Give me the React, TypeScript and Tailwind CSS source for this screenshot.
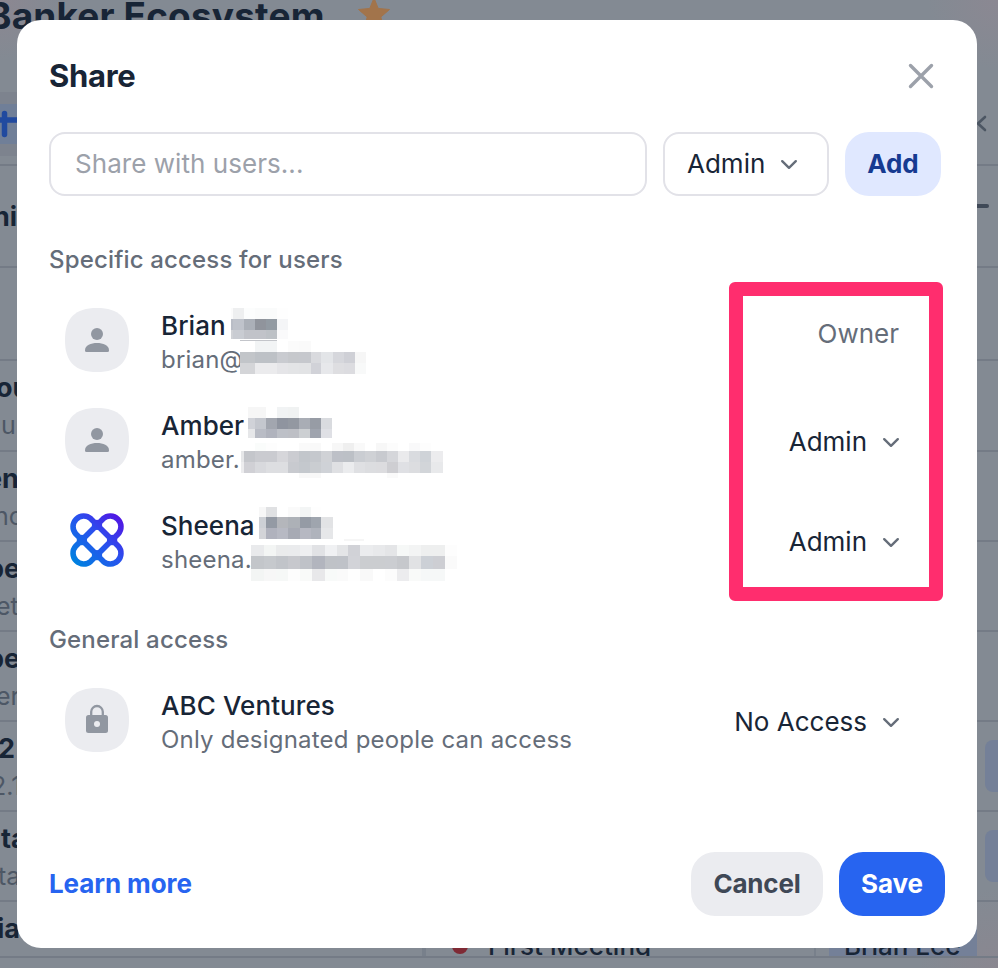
import type { ReactNode } from "react";
import { clsx } from "clsx";

type Patch = { x: number; y: number; cols: number[]; rows: number[]; cells: string[] };

const W = "#ffffff";

// each row of cells is a space separated list of colours
const users: { name: string; email: string; role: string; logo?: boolean; patches: Patch[] }[] = [
  {
    name: "Brian",
    email: "brian@",
    role: "Owner",
    patches: [
      {
        x: 231, y: 18, cols: [2, 11, 11, 11, 11, 11], rows: [11, 11, 9],
        cells: [
          "#fbfbfb #eeeff0 #fcfdfd #fafbfb #fafbfb #fefefe",
          "#b9bdc6 #bfc3cb #abb0b8 #90949c #929aa2 #f4f5f7",
          "#d0d2d6 #c9ccd2 #c1c3c9 #c1c3c9 #bdc1c6 #fafafb",
        ],
      },
      { x: 240, y: 50, cols: [37], rows: [1], cells: ["#c3c5ca"] },
      {
        x: 240, y: 51, cols: [15, 22, 11, 11, 12, 10, 12, 11, 11, 11], rows: [11, 11, 11],
        cells: [
          `${W} #f2f4f5 ${W} #fbfbfb #fafafa ${W} ${W} ${W} ${W} ${W}`,
          "#c2c5c9 #bdc1c6 #c9cbd0 #c6c8cc #c6c8cd #d9dade #e3e5e8 #d6d7dc #cfd0d6 #f6f6f6",
          "#d4d5d8 #ebebed #e5e5e8 #e3e4e6 #e2e3e5 #d1d2d8 #e7e8eb #dedee1 #dcdce0 #f8f9f9",
        ],
      },
    ],
  },
  {
    name: "Amber",
    email: "amber.",
    role: "Admin",
    patches: [
      {
        x: 248, y: 17, cols: [7, 11, 11, 11, 11, 11, 11, 11], rows: [11, 11, 9],
        cells: [
          `#f6f6f6 #f6f6f6 ${W} #f1f3f4 #f0f2f2 ${W} ${W} ${W}`,
          "#d0d2d8 #c4c7ce #a2a6af #8f949f #9398a1 #a9adb5 #979ca5 #d9dbdf",
          "#e6e7e9 #b9bcc5 #b0b3bd #bdc0c7 #bdbfc5 #cccfd2 #9fa4ae #dfe0e5",
        ],
      },
      {
        x: 241, y: 53, cols: [3, 11, 11, 11, 11, 11, 11, 11, 11, 11, 11, 11, 11, 11, 11, 11, 11, 11, 12], rows: [8, 11, 11, 5],
        cells: [
          `${W} ${W} #fafcfb #fdfdfd ${W} ${W} #fafafa #f9f9f9 ${W} #f7f7f7 #efefef #f9f9f9 ${W} #f7f7f7 #fcfcfc ${W} #f9f9fa #fdfdfd ${W}`,
          "#e6e7e9 #c4c6cb #cacbd0 #cacbd0 #d6d6da #cbccd1 #c2c6cb #c5c8cd #d0d2d6 #bdc0c7 #bcc0c6 #cacdd2 #cfd1d5 #c8cacf #d5d6da #eaeaec #d9dbdf #cfd3d8 #ececee",
          "#ececee #d0d0d5 #d8d9dd #dddee1 #dddee1 #c8cacf #c4c8cd #cacdd1 #cfd2d7 #dfe0e3 #ebecee #dfe0e3 #dcdde0 #dcdcdf #ceced2 #dfe0e4 #dcdde0 #d2d5d9 #e8e9eb",
          `${W} ${W} ${W} ${W} ${W} ${W} #f8f8f8 #f8f8f8 ${W} ${W} ${W} ${W} ${W} ${W} #fafafa ${W} ${W} ${W} ${W}`,
        ],
      },
    ],
  },
  {
    name: "Sheena",
    email: "sheena.",
    role: "Admin",
    logo: true,
    patches: [
      {
        x: 259, y: 17, cols: [7, 11, 11, 12, 11, 10, 12], rows: [10, 11, 11],
        cells: [
          `#f7f7f7 #e0e1e3 ${W} #fafafa #f3f5f5 #fefefe ${W}`,
          "#cdd0d5 #949aa4 #b4b6bb #adb1b7 #959ba5 #9fa5ae #e2e3e5",
          "#d3d4d8 #b0b2bd #b7b9c3 #a7aab4 #b6b8c2 #afb3bc #e6e7e9",
        ],
      },
      { x: 344, y: 49, cols: [20], rows: [2], cells: ["#f6f6f6"] },
      {
        x: 251, y: 55, cols: [13, 12, 12, 12, 12, 13, 12, 11, 12, 13, 12, 12, 12, 12, 12, 12, 12], rows: [11, 13, 12],
        cells: [
          "#e9eaec #f3f5f4 #eaebec #eaebed #eeeff1 #e1e2e5 #f0f1f3 #e4e5e7 #d1d2d7 #ebecee #e8e9eb #e4e5e7 #f6f8f7 #f3f4f4 #eeefef #eeefef #fdfdfd",
          "#c3c6ca #c6c9cd #c1c4c9 #c7c8cd #bfc2c8 #b2b5be #bfc2c7 #bfc2c8 #d2d3d8 #cbcdd0 #cbcdd0 #cbcdd1 #c6c8cc #e1e2e4 #ccd0d6 #cdced3 #fafafa",
          `#f3f5f4 #f7f7f7 #f6f8f7 #fdfdfd #f9faf9 #e8e8ea #f8faf9 #fafafa #fefefe #f9f9f9 ${W} #fcfcfc #ececee #f9faf9 #f6f8f8 #f6f8f8 ${W}`,
        ],
      },
    ],
  },
];

// table rows that stay visible around the dialog
const rows = [
  { h: "h-[93px]", title: "", sub: "", shift: "", subShift: "", chip: false },
  { h: "h-[91px]", title: "ou", sub: "u", shift: "-ml-[4px]", subShift: "ml-[1px]", chip: false },
  { h: "h-[90px]", title: "en", sub: "nc", shift: "-ml-[14px]", subShift: "-ml-[6px]", chip: false },
  { h: "h-[90px]", title: "be", sub: "et", shift: "-ml-[13px]", subShift: "-ml-[4px]", chip: false },
  { h: "h-[90px]", title: "be", sub: "er", shift: "-ml-[13px]", subShift: "-ml-[4px]", chip: false },
  { h: "h-[90px]", title: "2", sub: "2.1", shift: "-ml-[2px]", subShift: "-ml-[9px]", chip: true },
  { h: "h-[90px]", title: "ta", sub: "ta", shift: "ml-[1px]", subShift: "-ml-[2px]", chip: true },
];

function Mosaic({ patch }: { patch: Patch }) {
  return (
    <div className="absolute" style={{ left: patch.x - 49, top: patch.y }}>
      {patch.cells.map((line, r) => (
        <div key={r} className="flex" style={{ height: patch.rows[r] }}>
          {line.split(" ").map((c, i) => (
            <span key={i} style={{ width: patch.cols[i], backgroundColor: c }} />
          ))}
        </div>
      ))}
    </div>
  );
}

function Chevron() {
  return (
    <svg className="w-6 h-6 shrink-0" viewBox="0 0 24 24" fill="none" stroke="#656d79" strokeWidth="2.4" strokeLinecap="round" strokeLinejoin="round">
      <path d="M5.2 9.2 12 15.8l6.800-6.600" />
    </svg>
  );
}

function Avatar({ children }: { children: ReactNode }) {
  return (
    <svg className="w-16 h-16 shrink-0" viewBox="0 0 64 64">
      <path d="M32 0C54 0 64 10 64 32S54 64 32 64 0 54 0 32 10 0 32 0Z" fill="#ebecf0" />
      {children}
    </svg>
  );
}

function PersonAvatar() {
  return (
    <Avatar>
      <circle cx="32" cy="26" r="6" fill="#9197a1" />
      <path d="M20 42.500C20 37 26 35 32 35s12 2 12 7.500q0 1.500-1.500 1.500h-21Q20 44 20 42.500Z" fill="#9197a1" />
    </Avatar>
  );
}

function LockAvatar() {
  return (
    <Avatar>
      <path d="M26.200 28v-4.200a5.800 5.800 0 0 1 11.600 0V28" fill="none" stroke="#9197a1" strokeWidth="2.300" />
      <rect x="21" y="27" width="22" height="18" rx="2.500" fill="#9197a1" />
      <circle cx="32" cy="36" r="3" fill="#ebecf0" />
    </Avatar>
  );
}

function LoopLogo() {
  return (
    <svg className="w-16 h-16 shrink-0" viewBox="0 0 64 64" fill="none">
      <defs>
        <linearGradient id="loop" gradientUnits="userSpaceOnUse" x1="10" y1="54" x2="54" y2="10">
          <stop offset="0" stopColor="#0080e0" />
          <stop offset="0.550" stopColor="#2a50ee" />
          <stop offset="1" stopColor="#5018e4" />
        </linearGradient>
      </defs>
      <g stroke="url(#loop)" strokeWidth="5.600">
        <path d="M10.700 25.800A10.700 10.700 0 0 1 25.800 10.700L53.300 38.200A10.700 10.700 0 0 1 38.200 53.300Z" />
        <path d="M38.200 10.700A10.700 10.700 0 0 1 53.300 25.800L25.800 53.300A10.700 10.700 0 0 1 10.700 38.200Z" />
      </g>
      <g fill="url(#loop)">
        <circle cx="32" cy="16.900" r="5.200" />
        <circle cx="32" cy="47.100" r="5.200" />
        <circle cx="16.900" cy="32" r="5.200" />
        <circle cx="47.100" cy="32" r="5.200" />
      </g>
    </svg>
  );
}

function Backdrop() {
  return (
    <div className="w-full h-full bg-[radial-gradient(circle_at_0_0,#8c8791,transparent_60px),radial-gradient(circle_at_100%_0,#8b8892,transparent_70px),radial-gradient(circle_at_100%_100%,#8a8790,transparent_80px)] bg-[#838a93]">
      <div className="h-[166px] border-b-2 border-[#747b86] flex flex-col">
        <div className="flex h-[92px] items-start">
          <h1 className="-ml-[13px] -mt-[9px] w-[371px] text-[37px] leading-[50px] font-bold whitespace-nowrap tracking-[0.15px]">Banker Ecosystem</h1>
          <svg className="-mt-[3px] w-[32px] h-[32px]" viewBox="0 0 32 32" fill="#a2744b">
            <path d="m16 1 4.200 10.400L31.500 12.500 22.800 20l2.700 11L16 25l-9.500 6 2.700-11L.5 12.500l11.300-1.100Z" stroke="#a2744b" strokeLinejoin="round" />
          </svg>
        </div>
        <div className="flex h-16 items-center justify-between">
          <div className="w-[24px] h-full bg-[#7d838e] flex items-center">
            <svg className="w-[24px] h-10 bg-[#707f98]" viewBox="0 0 24 40" stroke="#214a9f" strokeWidth="5.500" strokeLinecap="round">
              <path d="M-6 16H22M4.500 9.500v21" />
            </svg>
          </div>
          <svg className="w-[24px] h-6" viewBox="0 0 24 24" fill="none" stroke="#4c5663" strokeWidth="2.600" strokeLinecap="round" strokeLinejoin="round">
            <path d="m11 5-7 6.500 7 6.500" />
          </svg>
        </div>
      </div>
      <div className="h-[102px] border-b-2 border-[#747b86] flex items-center justify-between pr-[9px]">
        <span className="-ml-[7px] pt-[2px] text-[27px] font-bold">ni</span>
        <span className="w-6 h-[4px] mb-[20px] rounded-full bg-[#3f4957]" />
      </div>
      {rows.map((row, i) => (
        <div key={i} className={clsx("border-b-2 border-[#747b86] flex items-start justify-between", row.h)}>
          <div className="pt-[9px]">
            <p className={clsx("text-[27px] leading-[36px] font-bold", row.shift)}>{row.title}</p>
            <p className={clsx("pt-[2px] text-[25px] leading-[34px] text-[#4d5765]", row.subShift)}>{row.sub}</p>
          </div>
          {row.chip && <span className="w-[13px] h-[52px] mt-[18px] rounded-l-lg bg-[#748098]" />}
        </div>
      ))}
      <div className="h-[56px] border-b-2 border-[#747b86] flex overflow-hidden text-[26px] font-medium">
        <div className="w-[426px] border-r-4 border-[#78808b]">
          <p className="-ml-[3px] pt-[9px] text-[27px] leading-[36px] font-bold">ia</p>
        </div>
        <div className="w-[390px] border-r-2 border-[#78808b] flex items-start pl-[26px] pt-[26px]">
          <span className="w-4 h-4 mt-[10px] rounded-full bg-[#7f2a35]" />
          <span className="ml-5 leading-[36px] whitespace-nowrap">First Meeting</span>
        </div>
        <div className="ml-[13px] w-[148px] bg-[#748098] pl-[15px] pt-[26px] leading-[36px] whitespace-nowrap">Brian Lee</div>
      </div>
    </div>
  );
}

export default function App() {
  return (
    <div className="relative w-[998px] h-[968px] overflow-hidden text-[#182536] font-['Inter',sans-serif]">
      <Backdrop />

      {/* Share dialog */}
      <div className="absolute left-[17px] top-5 w-[960px] h-[928px] rounded-3xl bg-white px-8 flex flex-col">
        <div className="flex h-28 items-center justify-between pr-[8px]">
          <h2 className="pt-px text-[31px] font-bold tracking-[-0.3px]">Share</h2>
          <svg className="w-8 h-8" viewBox="0 0 32 32" stroke="#9ca1aa" strokeWidth="3.400" strokeLinecap="round">
            <path d="m5.500 5.500 21 21m0-21-21 21" />
          </svg>
        </div>

        <div className="flex h-16 gap-4 shrink-0">
          <div className="w-[598px] rounded-2xl border-2 border-[#e2e2e8] px-6 pb-[2px] flex items-center text-[26px] tracking-[0.05px] text-[#9ca1aa]">Share with users...</div>
          <div className="w-[166px] rounded-2xl border-2 border-[#e2e2e8] pl-[22px] pr-[26px] flex items-center justify-between text-[26px]">
            <span className="mb-[2px]">Admin</span> <Chevron />
          </div>
          <button className="w-24 rounded-3xl bg-[#e0e8ff] pb-[2px] text-[#163a91] text-[26px] font-bold tracking-[-0.1px]">Add</button>
        </div>

        <h3 className="mt-[46px] h-9 leading-9 text-[24px] font-medium tracking-[0.16px] text-[#656d79]">Specific access for users</h3>

        <div className="mt-[12px]">
          {users.map((user) => (
            <div key={user.name} className="relative h-[100px] flex items-center pl-4 pr-[42px]">
              {user.logo ? <LoopLogo /> : <PersonAvatar />}
              <div className="ml-8 mt-[5px] grow">
                <p className="text-[26px] leading-[34px] font-medium tracking-[0.05px]">{user.name}</p>
                <p className="text-[24px] leading-[34px] tracking-[0.21px] text-[#656d79]">{user.email}</p>
              </div>
              {user.role === "Owner" ? (
                <span className="mb-[14px] pr-[4px] text-[26px] text-[#656d79]">Owner</span>
              ) : (
                <span className="mt-[4px] flex items-center gap-3 text-[26px]">
                  <span className="mb-[2px]">{user.role}</span> <Chevron />
                </span>
              )}
              {user.patches.map((p, i) => (
                <Mosaic key={i} patch={p} />
              ))}
            </div>
          ))}
        </div>

        <h3 className="mt-[32px] h-9 leading-9 text-[24px] font-medium tracking-[0.16px] text-[#656d79]">General access</h3>

        <div className="mt-[12px] h-[100px] flex items-center pl-4 pr-[42px]">
          <LockAvatar />
          <div className="ml-8 mt-[5px] grow">
            <p className="text-[26px] leading-[34px] font-medium tracking-[0.1px]">ABC Ventures</p>
            <p className="text-[24px] leading-[34px] tracking-[0.21px] text-[#656d79]">Only designated people can access</p>
          </div>
          <span className="mt-[4px] flex items-center gap-3 text-[26px]">
            <span className="mb-[2px]">No Access</span> <Chevron />
          </span>
        </div>

        <div className="mt-auto mb-8 h-16 flex items-stretch gap-4">
          <a className="mr-auto self-center pb-[2px] text-[26px] font-bold tracking-[-0.1px] text-[#2764f0]">Learn more</a>
          <button className="w-[132px] rounded-3xl bg-[#ebecf0] pb-[2px] text-[#3f4856] text-[26px] font-bold tracking-[-0.2px]">Cancel</button>
          <button className="w-[106px] rounded-3xl bg-[#2764f0] pb-[2px] text-white text-[26px] font-bold tracking-[-0.1px]">Save</button>
        </div>
      </div>

      {/* highlight around the roles */}
      <div className="absolute left-[729px] top-[282px] w-[214px] h-[319px] rounded-md border-[14px] border-[#ff2d6e]" />
    </div>
  );
}
